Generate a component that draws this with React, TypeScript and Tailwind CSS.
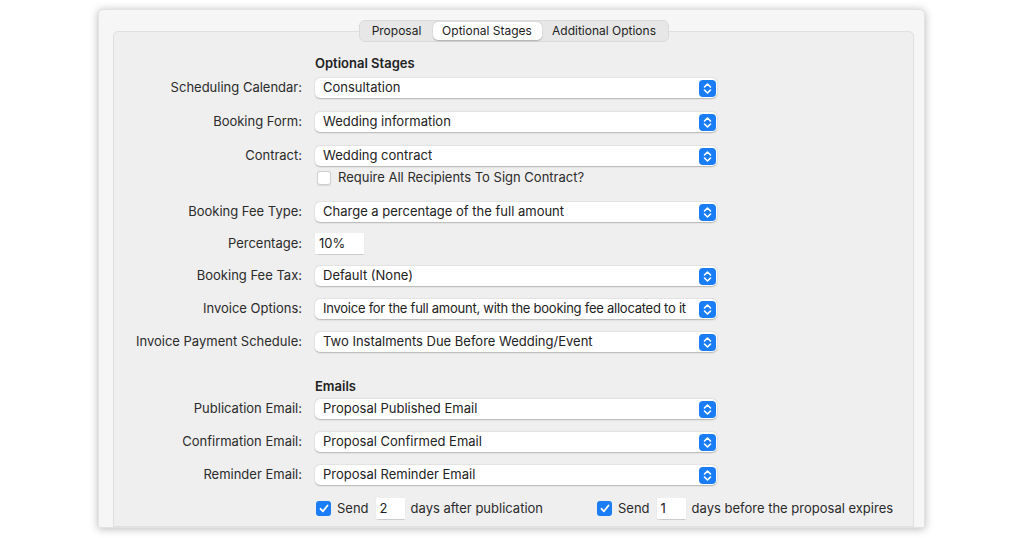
import { ReactNode } from "react"

const font = { fontFamily: "Inter, 'Noto Sans', 'Liberation Sans', sans-serif" }

function Stepper() {
    return (
        <div className="flex h-[17px] w-[17px] shrink-0 items-center justify-center rounded-[4px] bg-[#1a7df6]">
            <svg width="9" height="13" viewBox="0 0 9 13" fill="none">
                <path d="M1.5 5L4.5 2L7.5 5" stroke="white" strokeWidth="1.6" strokeLinecap="round" strokeLinejoin="round" />
                <path d="M1.5 8L4.5 11L7.5 8" stroke="white" strokeWidth="1.6" strokeLinecap="round" strokeLinejoin="round" />
            </svg>
        </div>
    )
}

function Select({ value, tight }: { value: string; tight?: boolean }) {
    return (
        <div className="flex h-[20px] w-[402px] items-center justify-between gap-[1px] rounded-[5px] bg-white pl-[8px] pr-[1px] shadow-[0_0.5px_1.5px_rgba(0,0,0,0.25)]">
            <span className={"overflow-hidden whitespace-nowrap text-[13px] text-[#222]" + (tight ? " tracking-[-0.25px]" : "")}>{value}</span>
            <Stepper />
        </div>
    )
}

function Checkbox({ checked }: { checked?: boolean }) {
    if (checked) {
        return (
            <div className="flex h-[15px] w-[15px] shrink-0 items-center justify-center rounded-[3px] bg-[#1a7df6]">
                <svg width="10" height="9" viewBox="0 0 10 9" fill="none">
                    <path d="M1.5 4.8L4 7.3L8.5 1.5" stroke="white" strokeWidth="1.8" strokeLinecap="round" strokeLinejoin="round" />
                </svg>
            </div>
        )
    }
    return <div className="h-[14px] w-[14px] shrink-0 rounded-[3px] border border-[#cfcfcf] bg-white shadow-[0_0.5px_1px_rgba(0,0,0,0.1)]" />
}

function Row({ label, className, children }: { label?: string; className?: string; children: ReactNode }) {
    return (
        <div className={"flex items-center " + (className ?? "")}>
            <div className="w-[188px] shrink-0 text-right text-[13px] text-[#2b2b2b]">{label}</div>
            <div className="ml-[13px] flex items-center">{children}</div>
        </div>
    )
}

function SmallInput({ value, width }: { value: string; width: string }) {
    return (
        <div className={"flex h-[21px] items-center bg-white pl-[4px] text-[13px] text-[#222] shadow-[0_0.5px_1px_rgba(0,0,0,0.15)] " + width}>
            {value}
        </div>
    )
}

export default function App() {
    const tabs = [
        { name: "Proposal", width: "w-[72px]", active: false },
        { name: "Optional Stages", width: "w-[109px]", active: true },
        { name: "Additional Options", width: "w-[125px]", active: false },
    ]

    return (
        <div className="h-[538px] w-[1024px] overflow-hidden bg-white pl-[98px] pt-[9px]" style={font}>
            <div className="flex h-[519px] w-[827px] flex-col rounded-t-[5px] border border-[#e2e2e2] bg-[#f6f6f6] pl-[14px] pr-[10px] pt-[10px] shadow-[0_1px_9px_rgba(0,0,0,0.28)]">
                <div className="relative z-10 flex justify-center">
                    <div className="flex h-[22px] rounded-[6px] border border-[#dadada] bg-[#e7e7e7] p-[1px]">
                        {tabs.map((tab) => (
                            <div
                                key={tab.name}
                                className={
                                    "flex items-center justify-center rounded-[5px] text-[12px] text-[#222] " +
                                    tab.width +
                                    (tab.active ? " bg-white shadow-[0_0.5px_1.5px_rgba(0,0,0,0.25)]" : "")
                                }
                            >
                                {tab.name}
                            </div>
                        ))}
                    </div>
                </div>

                <div className="-mt-[11px] flex-1 rounded-t-[5px] border border-[#e0e0e0] bg-[#efefef] pt-[23px]">
                    <Row label="">
                        <div className="h-[16px] text-[13px] leading-[16px] font-semibold text-[#222]">Optional Stages</div>
                    </Row>
                    <Row label="Scheduling Calendar:" className="mt-[7px]">
                        <Select value="Consultation" />
                    </Row>
                    <Row label="Booking Form:" className="mt-[14px]">
                        <Select value="Wedding information" />
                    </Row>
                    <Row label="Contract:" className="mt-[14px]">
                        <Select value="Wedding contract" />
                    </Row>
                    <Row label="" className="mt-[4px]">
                        <div className="flex h-[16px] items-center gap-[7px] pl-[2px]">
                            <Checkbox />
                            <span className="text-[13px] text-[#2b2b2b]">Require All Recipients To Sign Contract?</span>
                        </div>
                    </Row>
                    <Row label="Booking Fee Type:" className="mt-[16px]">
                        <Select value="Charge a percentage of the full amount" />
                    </Row>
                    <Row label="Percentage:" className="mt-[11px]">
                        <SmallInput value="10%" width="w-[49px]" />
                    </Row>
                    <Row label="Booking Fee Tax:" className="mt-[12px]">
                        <Select value="Default (None)" />
                    </Row>
                    <Row label="Invoice Options:" className="mt-[13px]">
                        <Select value="Invoice for the full amount, with the booking fee allocated to it" tight />
                    </Row>
                    <Row label="Invoice Payment Schedule:" className="mt-[13px]">
                        <Select value="Two Instalments Due Before Wedding/Event" />
                    </Row>

                    <Row label="" className="mt-[26px]">
                        <div className="h-[16px] text-[13px] leading-[16px] font-semibold text-[#222]">Emails</div>
                    </Row>
                    <Row label="Publication Email:" className="mt-[5px]">
                        <Select value="Proposal Published Email" />
                    </Row>
                    <Row label="Confirmation Email:" className="mt-[13px]">
                        <Select value="Proposal Confirmed Email" />
                    </Row>
                    <Row label="Reminder Email:" className="mt-[13px]">
                        <Select value="Proposal Reminder Email" />
                    </Row>
                    <Row label="" className="mt-[13px]">
                        <div className="flex items-center pl-[1px] text-[13px] text-[#2b2b2b]">
                            <Checkbox checked />
                            <span className="ml-[6px]">Send</span>
                            <div className="ml-[7px]">
                                <SmallInput value="2" width="w-[29px]" />
                            </div>
                            <span className="ml-[6px]">days after publication</span>

                            <div className="ml-[54px]">
                                <Checkbox checked />
                            </div>
                            <span className="ml-[6px]">Send</span>
                            <div className="ml-[7px]">
                                <SmallInput value="1" width="w-[29px]" />
                            </div>
                            <span className="ml-[6px]">days before the proposal expires</span>
                        </div>
                    </Row>
                </div>
            </div>
        </div>
    )
}
